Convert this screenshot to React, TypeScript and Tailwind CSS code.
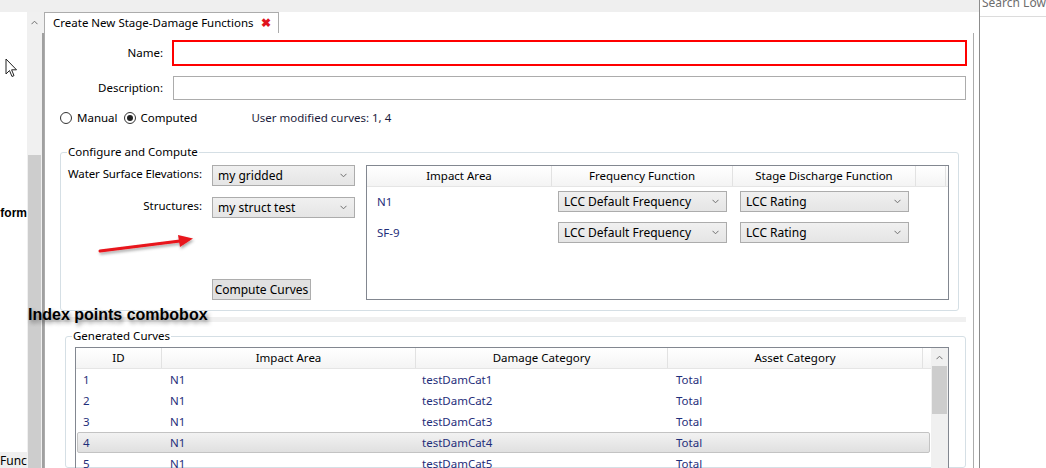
import React from "react"

const CELL = "text-[#1f2e7a]"

function Chevron({ up = false }: { up?: boolean }) {
  return (
    <svg width="7" height="5" viewBox="0 0 7 5" className="shrink-0">
      <path
        d={up ? "M0.5 4.2 L3.5 1.2 L6.5 4.2" : "M0.5 0.8 L3.5 3.8 L6.5 0.8"}
        fill="none"
        stroke="#6f6f6f"
        strokeWidth="1"
      />
    </svg>
  )
}

function Combo({ value, className = "" }: { value: string; className?: string }) {
  return (
    <div
      className={`flex h-[21px] shrink-0 items-center justify-between border border-[#acacac] bg-linear-to-b from-[#f0f0f0] to-[#e5e5e5] pl-[5px] pr-[7px] text-[12px] text-black ${className}`}
    >
      <span className="leading-none">{value}</span>
      <Chevron />
    </div>
  )
}

function Radio({ checked, label }: { checked?: boolean; label: string }) {
  return (
    <div className="flex items-center gap-[5px]">
      <span className="flex h-[12px] w-[12px] items-center justify-center rounded-full border border-[#333] bg-white">
        {checked && <span className="h-[6px] w-[6px] rounded-full bg-[#222]" />}
      </span>
      <span>{label}</span>
    </div>
  )
}

function HeaderCell({ children, className = "" }: { children?: React.ReactNode; className?: string }) {
  return (
    <div className={`flex h-full shrink-0 items-center justify-center border-r border-[#e2e2e2] ${className}`}>{children}</div>
  )
}

const curves = [1, 2, 3, 4, 5]

export default function App() {
  return (
    <div className="relative flex h-[468px] w-[1046px] overflow-hidden bg-white font-['Noto_Sans',sans-serif] text-[11.5px] text-black">
      {/* left app area */}
      <div className="flex w-[979px] shrink-0 flex-col">
        <div className="h-[12px] shrink-0 bg-[#efefef]" />
        <div className="flex min-h-0 flex-1 overflow-hidden">
          {/* left explorer pane */}
          <div className="flex w-[27px] shrink-0 flex-col overflow-hidden">
            <svg width="14" height="21" viewBox="0 0 14 21" className="ml-[5px] mt-[46px] shrink-0">
              <path d="M1 1 L1 16 L4.5 12.5 L7 18.5 L9 17.6 L6.6 11.8 L11.5 11.8 Z" fill="white" stroke="#222" strokeWidth="1" />
            </svg>
            <div className="mt-[127px] whitespace-nowrap text-right font-['Liberation_Sans',sans-serif] text-[12px] font-bold leading-[14px]">form</div>
            <div className="flex-1" />
            <div className="h-[16px] shrink-0 overflow-hidden whitespace-nowrap bg-[#efefef] pt-[2px] text-[12px] leading-[14px]">Function</div>
          </div>
          {/* scrollbar */}
          <div className="flex w-[15px] shrink-0 flex-col bg-[#f0f0f0]">
            <div className="flex h-[20px] shrink-0 items-center justify-center">
              <Chevron up />
            </div>
            <div className="h-[123px] shrink-0" />
            <div className="ml-[1px] w-[13px] flex-1 bg-[#cdcdcd]" />
          </div>
          {/* document area */}
          <div className="flex min-w-0 flex-1 flex-col">
            <div className="flex h-[21px] shrink-0 bg-[#f0f0f0]">
              <div className="w-[2px]" />
              <div className="flex w-[235px] items-center gap-[7px] border-l border-r border-t border-[#acacac] bg-white pl-[8px]">
                <span className="whitespace-nowrap">Create New Stage-Damage Functions</span>
                <span className="text-[12px] font-bold leading-none text-[#e0141e]">✖</span>
              </div>
              <div className="flex-1 bg-white" />
            </div>
            <div className="flex min-h-0 flex-1">
              <div className="w-[2px] bg-[#a0a0a0]" />
              <div className="flex w-[930px] flex-col border-l border-r border-[#acacac] bg-white">
                {/* name */}
                <div className="mt-[7px] flex shrink-0 items-center">
                  <div className="w-[118px] text-right">Name:</div>
                  <div className="ml-[9px] mr-[6px] h-[26px] flex-1 border-2 border-[#ff0000]" />
                </div>
                <div className="mt-[10px] flex shrink-0 items-center">
                  <div className="w-[118px] text-right">Description:</div>
                  <div className="ml-[10px] mr-[7px] h-[24px] flex-1 border border-[#acacac]" />
                </div>
                <div className="ml-[15px] mt-[11px] flex h-[14px] shrink-0 items-center">
                  <Radio label="Manual" />
                  <div className="w-[6px]" />
                  <Radio checked label="Computed" />
                  <span className="ml-[54px] text-[#1b1b3a]">User modified curves: 1, 4</span>
                </div>

                {/* configure and compute */}
                <fieldset className="ml-[15px] mr-[14px] mt-[20px] shrink-0 rounded-[3px] border border-[#d5dfe5] pb-[10px]">
                  <legend className="ml-[6px] px-[1px] leading-[14px]">Configure and Compute</legend>
                  <div className="mt-[6px] flex">
                    <div className="flex w-[305px] flex-col">
                      <div className="flex items-center">
                        <div className="w-[141px] whitespace-nowrap pb-[3px] text-right tracking-[-0.1px]">Water Surface Elevations:</div>
                        <Combo value="my gridded" className="ml-[10px] w-[143px]" />
                      </div>
                      <div className="mt-[11px] flex items-center">
                        <div className="w-[141px] pb-[3px] text-right">Structures:</div>
                        <Combo value="my struct test" className="ml-[10px] w-[143px]" />
                      </div>
                      <div className="flex-1" />
                      <div className="ml-[151px] flex h-[21px] w-[99px] items-center justify-center border border-[#adadad] bg-[#e1e1e1] text-[12px]">
                        Compute Curves
                      </div>
                    </div>
                    <div className="flex h-[135px] w-[583px] flex-col border border-[#828790]">
                      <div className="flex h-[21px] border-b border-[#e5e5e5] bg-linear-to-b from-white to-[#f4f4f4]">
                        <HeaderCell className="w-[185px]">Impact Area</HeaderCell>
                        <HeaderCell className="w-[181px]">Frequency Function</HeaderCell>
                        <HeaderCell className="w-[183px]">Stage Discharge Function</HeaderCell>
                        <HeaderCell className="w-[30px]" />
                      </div>
                      {["N1", "SF-9"].map((area, i) => (
                        <div key={area} className={`flex h-[21px] items-center ${i === 0 ? "mt-[4px]" : "mt-[10px]"}`}>
                          <div className={`w-[185px] pl-[10px] ${CELL}`}>{area}</div>
                          <Combo value="LCC Default Frequency" className="ml-[6px] w-[169px]" />
                          <Combo value="LCC Rating" className="ml-[13px] w-[169px]" />
                        </div>
                      ))}
                    </div>
                  </div>
                </fieldset>

                {/* splitter */}
                <div className="mr-[7px] mt-[6px] h-[5px] shrink-0 bg-[#f0f0f0]" />

                {/* generated curves */}
                <fieldset className="ml-[20px] mr-[7px] mt-[7px] min-h-0 flex-1 rounded-[3px] border border-[#d5dfe5]">
                  <legend className="ml-[6px] px-[1px] leading-[14px]">Generated Curves</legend>
                  <div className="ml-[9px] mr-[16px] mt-[4px] flex h-[200px] border border-[#828790]">
                    <div className="flex flex-1 flex-col">
                      <div className="flex h-[21px] shrink-0 border-b border-[#e5e5e5] bg-linear-to-b from-white to-[#f4f4f4]">
                        <HeaderCell className="w-[86px]">ID</HeaderCell>
                        <HeaderCell className="w-[254px]">Impact Area</HeaderCell>
                        <HeaderCell className="w-[252px]">Damage Category</HeaderCell>
                        <HeaderCell className="w-[255px]">Asset Category</HeaderCell>
                      </div>
                      {curves.map((n) => (
                        <div
                          key={n}
                          className={`flex h-[21px] shrink-0 items-center ${CELL} ${
                            n === 4
                              ? "mx-[1px] rounded-[2px] border border-[#c3c3c3] bg-linear-to-b from-[#f2f2f2] to-[#e0e0e0]"
                              : "mx-[1px] border border-transparent"
                          }`}
                        >
                          <div className="w-[85px] pl-[5px]">{n}</div>
                          <div className="w-[254px] pl-[7px]">N1</div>
                          <div className="w-[252px] pl-[5px]">testDamCat{n}</div>
                          <div className="w-[255px] pl-[7px]">Total</div>
                        </div>
                      ))}
                    </div>
                    <div className="flex w-[17px] flex-col bg-[#f0f0f0]">
                      <div className="flex h-[18px] items-center justify-center">
                        <Chevron up />
                      </div>
                      <div className="mx-[1px] h-[48px] bg-[#cdcdcd]" />
                    </div>
                  </div>
                </fieldset>
              </div>
            </div>
          </div>
        </div>
      </div>

      {/* right pane */}
      <div className="flex flex-1 flex-col border-l border-[#8c8c8c]">
        <div className="-mt-[5px] h-[22px] whitespace-nowrap border-b border-[#dcdcdc] pl-[2px] text-[12px] leading-[16px] text-[#6d6d6d]">
          Search Lower
        </div>
      </div>

      {/* screenshot annotations */}
      <div className="pointer-events-none absolute left-[28px] top-[305px] whitespace-nowrap font-['Liberation_Sans',sans-serif] text-[16px] font-bold leading-[20px] text-black [text-shadow:2px_3px_4px_rgba(0,0,0,0.45)]">
        Index points combobox
      </div>
      <svg className="pointer-events-none absolute left-[96px] top-[230px]" width="104" height="30" viewBox="0 0 104 30">
        <defs>
          <filter id="sh" x="-20%" y="-50%" width="140%" height="200%">
            <feDropShadow dx="1" dy="2" stdDeviation="1.5" floodColor="#000" floodOpacity="0.35" />
          </filter>
        </defs>
        <g filter="url(#sh)">
          <path d="M4 21 L84 11" stroke="#e8141c" strokeWidth="3" strokeLinecap="round" />
          <path d="M82 5 L97 8.5 L84 17 Z" fill="#e8141c" />
        </g>
      </svg>
    </div>
  )
}
